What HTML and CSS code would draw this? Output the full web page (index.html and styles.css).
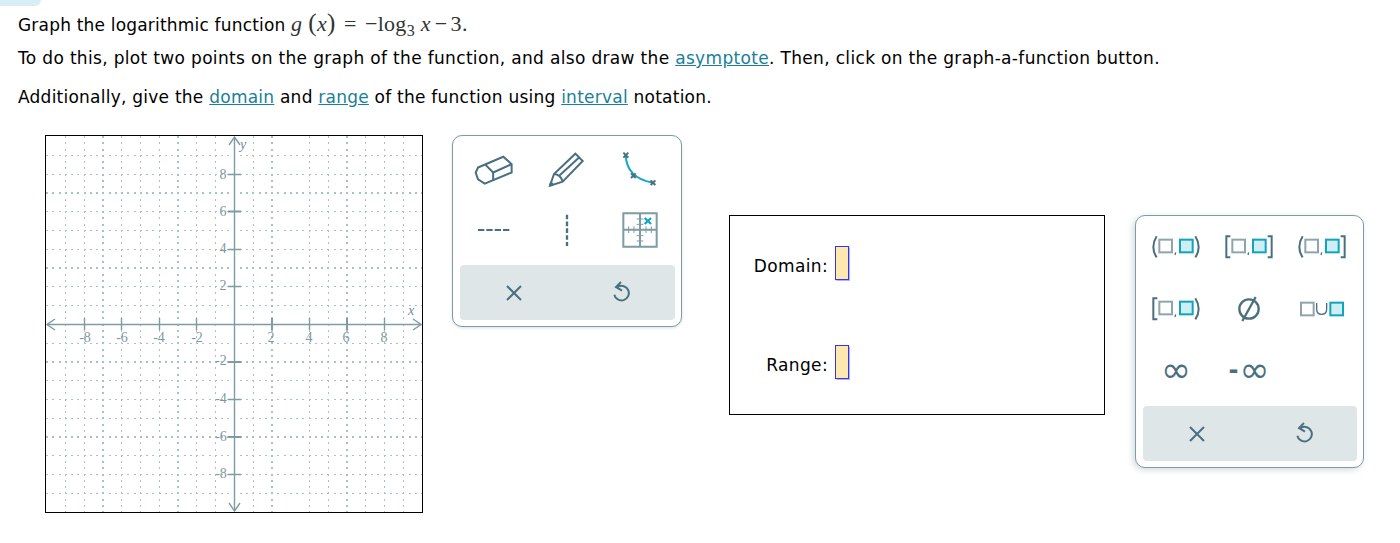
FILE: index.html
```html
<!DOCTYPE html>
<html lang="en">
<head>
    <meta charset="UTF-8">
    <title>Graph the logarithmic function</title>
    <link rel="stylesheet" href="styles.css">
</head>
<body>
    <div class="corner"></div>

    <div class="question">
        <p class="line-first">Graph the logarithmic function <span class="math"><i>g</i> <span class="paren">(</span><i>x</i><span class="paren">)</span> <span class="rel">=</span> &minus;log<sub>3</sub> <i>x</i><span class="op">&minus;</span>3.</span></p>
        <p class="line-second">To do this, plot two points on the graph of the function, and also draw the <a href="#">asymptote</a>. Then, click on the graph-a-function button.</p>
        <p class="line-third">Additionally, give the <a href="#">domain</a> and <a href="#">range</a> of the function using <a href="#">interval</a> notation.</p>
    </div>

    <div class="work">
        <!-- graph, svg uses page coordinates -->
        <div class="graph">
            <svg width="376" height="376" viewBox="46 136 376 376">
                <path class="grid" d="M65.5 136V512M84.5 136V512M121.5 136V512M140.5 136V512M159.5 136V512M196.5 136V512M215.5 136V512M253.5 136V512M309.5 136V512M328.5 136V512M365.5 136V512M384.5 136V512M403.5 136V512"/>
                <path class="grid" d="M46 155.5H422M46 174.5H422M46 211.5H422M46 230.5H422M46 249.5H422M46 286.5H422M46 305.5H422M46 343.5H422M46 380.5H422M46 399.5H422M46 418.5H422M46 455.5H422M46 474.5H422M46 493.5H422"/>
                <path class="grid grid-thick" d="M103 136V512M178 136V512M272 136V512M347 136V512"/>
                <path class="grid grid-thick" d="M46 193H422M46 268H422M46 362H422M46 437H422"/>

                <path class="axis" d="M47 324.5H420M234.5 137V511"/>
                <path class="axis" d="M55 319L47 324.5L55 330M413 319L421 324.5L413 330M229 145L234.5 137L240 145M229 503L234.5 511L240 503"/>
                <path class="axis" d="M84.5 318V330M121.5 318V330M159.5 318V330M196.5 318V330M309.5 318V330M384.5 318V330M228 174.5H241M228 249.5H241M228 286.5H241M228 399.5H241M228 474.5H241"/>
                <path class="axis axis-thick" d="M272 318V330M347 318V330M228 211.5H241M228 362H241M228 437H241"/>

                <text class="num" x="85" y="342">-8</text>
                <text class="num" x="122" y="342">-6</text>
                <text class="num" x="159" y="342">-4</text>
                <text class="num" x="197" y="342">-2</text>
                <text class="num" x="271" y="342">2</text>
                <text class="num" x="309" y="342">4</text>
                <text class="num" x="346" y="342">6</text>
                <text class="num" x="384" y="342">8</text>
                <text class="num" x="223" y="179">8</text>
                <text class="num" x="223" y="216">6</text>
                <text class="num" x="223" y="253">4</text>
                <text class="num" x="223" y="290">2</text>
                <text class="num" x="221" y="365">-2</text>
                <text class="num" x="221" y="403">-4</text>
                <text class="num" x="221" y="441">-6</text>
                <text class="num" x="221" y="478">-8</text>
                <text class="num var" x="243" y="149">y</text>
                <text class="num var" x="411" y="315">x</text>
            </svg>
        </div>

        <!-- graph tools -->
        <div class="palette palette-graph">
            <div class="tools tools-graph">
                <button class="tool">
                    <svg width="42" height="32" viewBox="70 70 125 95"><path class="ink" d="M85 110L160 78L185 100V125L105 158L85 145L78 125ZM105 100L130 125V148M130 125L185 100"/></svg>
                </button>
                <button class="tool">
                    <svg width="40" height="38" viewBox="295 58 120 114"><path class="ink" d="M304 162L316 127L380 66L402 88L342 150ZM316 127Q336 128 342 150M330 134L392 77"/><circle class="dot" cx="308" cy="158" r="6"/></svg>
                </button>
                <button class="tool">
                    <svg width="40" height="40" viewBox="515 60 120 120"><path class="teal" d="M532 75Q535 145 614 158"/><path class="ink" d="M525 68L540 83M540 68L525 83M548 130L562 144M562 130L548 144M607 151L621 165M621 151L607 165"/></svg>
                </button>
                <button class="tool">
                    <svg width="34" height="8" viewBox="82 288 102 24"><path class="ink dash-h" d="M85 300H180"/></svg>
                </button>
                <button class="tool">
                    <svg width="6" height="34" viewBox="343 253 18 102"><path class="ink dash-v" d="M352 258V352"/></svg>
                </button>
                <button class="tool">
                    <svg width="38" height="38" viewBox="515 244 114 114">
                        <path class="frame" d="M522 251H622V351H522ZM572 251V351M522 300H622"/>
                        <path class="frame-thin" d="M538 290V310M554 290V310M590 290V310M606 290V310M562 268H582M562 284H582M562 318H582M562 334H582"/>
                        <path class="teal teal-x" d="M586 265L605 283M605 265L586 283"/>
                    </svg>
                </button>
            </div>
            <div class="actions">
                <button class="tool">
                    <svg width="16" height="16" viewBox="0 0 48 48"><path class="ink" d="M3 3L45 45M45 3L3 45"/></svg>
                </button>
                <button class="tool">
                    <svg width="18" height="24" viewBox="485 455 54 72"><path class="ink" d="M503 472A22 22 0 1 1 492 496M512 458L497 473L515 484"/></svg>
                </button>
            </div>
        </div>

        <!-- answers -->
        <div class="answers">
            <div class="answer-row">
                <label class="answer-label">Domain:</label>
                <span class="answer-box"></span>
            </div>
            <div class="answer-row">
                <label class="answer-label">Range:</label>
                <span class="answer-box"></span>
            </div>
        </div>

        <!-- interval tools -->
        <div class="palette palette-interval">
            <div class="tools tools-interval">
                <button class="tool">
                    <svg width="52" height="24" viewBox="0 0 156 72"><path class="ink" d="M20 4Q0 36 20 67M136 4Q156 36 136 67"/><rect class="sq" x="28" y="14" width="38" height="38"/><path class="comma" d="M77 52L75 60"/><rect class="sq-teal" x="90" y="14" width="38" height="38"/></svg>
                </button>
                <button class="tool">
                    <svg width="52" height="24" viewBox="0 0 156 72"><path class="ink" d="M22 4H10V67H22M134 4H146V67H134"/><rect class="sq" x="28" y="14" width="38" height="38"/><path class="comma" d="M77 52L75 60"/><rect class="sq-teal" x="90" y="14" width="38" height="38"/></svg>
                </button>
                <button class="tool">
                    <svg width="52" height="24" viewBox="0 0 156 72"><path class="ink" d="M20 4Q0 36 20 67M134 4H146V67H134"/><rect class="sq" x="28" y="14" width="38" height="38"/><path class="comma" d="M77 52L75 60"/><rect class="sq-teal" x="90" y="14" width="38" height="38"/></svg>
                </button>
                <button class="tool">
                    <svg width="52" height="24" viewBox="0 0 156 72"><path class="ink" d="M22 4H10V67H22M136 4Q156 36 136 67"/><rect class="sq" x="28" y="14" width="38" height="38"/><path class="comma" d="M77 52L75 60"/><rect class="sq-teal" x="90" y="14" width="38" height="38"/></svg>
                </button>
                <button class="tool">
                    <svg width="26" height="26" viewBox="0 0 78 78"><circle class="ink ink-bold" cx="39" cy="39" r="29"/><path class="ink ink-bold" d="M59 3L19 75"/></svg>
                </button>
                <button class="tool">
                    <svg width="46" height="16" viewBox="0 0 138 48"><rect class="sq" x="6" y="5" width="38" height="38"/><path class="ink ink-thin" d="M53 6V24Q53 40 68 40Q83 40 83 24V6"/><rect class="sq-teal" x="94" y="5" width="38" height="38"/></svg>
                </button>
                <button class="tool tool-text">&infin;</button>
                <button class="tool tool-text"><span class="minus">-</span>&infin;</button>
                <span></span>
            </div>
            <div class="actions">
                <button class="tool">
                    <svg width="16" height="16" viewBox="0 0 48 48"><path class="ink" d="M3 3L45 45M45 3L3 45"/></svg>
                </button>
                <button class="tool">
                    <svg width="18" height="24" viewBox="485 455 54 72"><path class="ink" d="M503 472A22 22 0 1 1 492 496M512 458L497 473L515 484"/></svg>
                </button>
            </div>
        </div>
    </div>
</body>
</html>
```

FILE: styles.css
```css
body {
    margin: 0;
    font-family: "DejaVu Sans", Verdana, sans-serif;
    font-size: 17px;
    color: #000;
    background: #fff;
    overflow: hidden;
}

.corner {
    width: 41px;
    height: 6px;
    background: #d7eff4;
    border-bottom-right-radius: 8px;
}

/* question text */
.question {
    padding-left: 18px;
}

.question p {
    margin: 0;
    white-space: nowrap;
}

.line-first {
    height: 38px;
    line-height: 34px;
    letter-spacing: 0.19px;
}

.line-second {
    height: 31px;
    line-height: 29px;
    letter-spacing: 0.33px;
}

.line-third {
    height: 60px;
    line-height: 45px;
    letter-spacing: 0.24px;
}

.question a {
    color: #1a7f99;
    text-decoration: underline;
}

.math {
    font-family: "Liberation Serif", "Times New Roman", serif;
    font-size: 22px;
    color: #333;
    letter-spacing: 0.3px;
}

.math sub {
    font-size: 16px;
    line-height: 0;
}

.paren {
    font-size: 25px;
    font-weight: normal;
}

.rel {
    margin: 0 2.5px;
}

.op {
    margin: 0 3px 0 4px;
}

/* main row */
.work {
    display: flex;
    align-items: flex-start;
    padding-left: 45px;
}

.graph {
    width: 376px;
    height: 376px;
    border: 1px solid #000;
    flex: none;
}

.graph svg {
    display: block;
}

.grid {
    fill: none;
    stroke: #a9c0c5;
    stroke-width: 1;
    stroke-dasharray: 2 4.25;
    shape-rendering: crispEdges;
}

.grid-thick {
    stroke-width: 2;
}

.axis {
    fill: none;
    stroke: #7f9ba3;
    stroke-width: 1.4;
}

.axis-thick {
    stroke-width: 2;
}

.num {
    font-family: "Liberation Serif", "Times New Roman", serif;
    font-size: 14px;
    fill: #7f98a0;
    text-anchor: middle;
}

.var {
    font-style: italic;
    fill: #6f8c95;
}

/* palettes */
.palette {
    box-sizing: border-box;
    flex: none;
    background: #fff;
    border: 1px solid #7f9ba3;
    border-radius: 10px;
    padding: 4px 6px 6px 6px;
}

.palette-graph {
    width: 230px;
    margin-left: 29px;
    box-shadow: 0 1px 3px rgba(127, 155, 163, 0.3);
}

.palette-interval {
    width: 229px;
    margin-left: 30px;
    margin-top: 80px;
    padding-top: 0;
    box-shadow: -2px 2px 6px rgba(127, 155, 163, 0.35);
}

.tools {
    display: grid;
    grid-template-columns: repeat(3, 73px);
    justify-content: center;
}

.tools-graph {
    grid-auto-rows: 60px;
    margin-bottom: 5px;
}

.tools-interval {
    grid-template-rows: 62px 62px 62px;
    margin-bottom: 4px;
    padding-right: 1px;
}

.tool {
    display: flex;
    align-items: center;
    justify-content: center;
    padding: 0;
    border: none;
    background: none;
    cursor: pointer;
}

.tool-text {
    font-family: "DejaVu Sans", Verdana, sans-serif;
    font-size: 36px;
    color: #4a7080;
    line-height: 1;
    padding-bottom: 3px;
}

.minus {
    font-weight: bold;
    font-size: 24px;
    margin-right: 1px;
}

.actions {
    display: grid;
    grid-template-columns: 1fr 1fr;
    height: 55px;
    margin-left: 1px;
    background: #dfe6e8;
    border-radius: 4px;
}

/* icon strokes */
.ink {
    fill: none;
    stroke: #4a7080;
    stroke-width: 6;
}

.ink-thin {
    stroke-width: 4;
}

.ink-bold {
    stroke-width: 7;
}

.dot {
    fill: #4a7080;
}

.teal {
    fill: none;
    stroke: #12a8c4;
    stroke-width: 6;
}

.teal-x {
    stroke-width: 7;
}

.dash-h {
    stroke-dasharray: 19 6;
}

.dash-v {
    stroke-width: 7;
    stroke-dasharray: 14 6.5;
}

.frame {
    fill: none;
    stroke: #7f9ba3;
    stroke-width: 6;
}

.frame-thin {
    fill: none;
    stroke: #7f9ba3;
    stroke-width: 3;
}

.sq {
    fill: #fff;
    stroke: #8fa5ac;
    stroke-width: 6;
}

.sq-teal {
    fill: #cdeef3;
    stroke: #12a3bd;
    stroke-width: 6;
}

.comma {
    fill: none;
    stroke: #4a7080;
    stroke-width: 4;
}

/* answer box */
.answers {
    box-sizing: border-box;
    flex: none;
    width: 376px;
    height: 200px;
    margin-left: 47px;
    margin-top: 80px;
    border: 1px solid #000;
    padding-top: 30px;
}

.answer-row {
    display: flex;
    align-items: center;
    justify-content: flex-end;
    width: 119px;
    height: 34px;
    margin-bottom: 65px;
}

.answer-label {
    margin-right: 7px;
    letter-spacing: 0.35px;
    padding-top: 5px;
}

.answer-box {
    box-sizing: border-box;
    width: 14px;
    height: 34px;
    background: #fde9ae;
    border: 1px solid #3333ff;
    box-shadow: 0 0 1px 0.5px #b0b0ff;
}
```
